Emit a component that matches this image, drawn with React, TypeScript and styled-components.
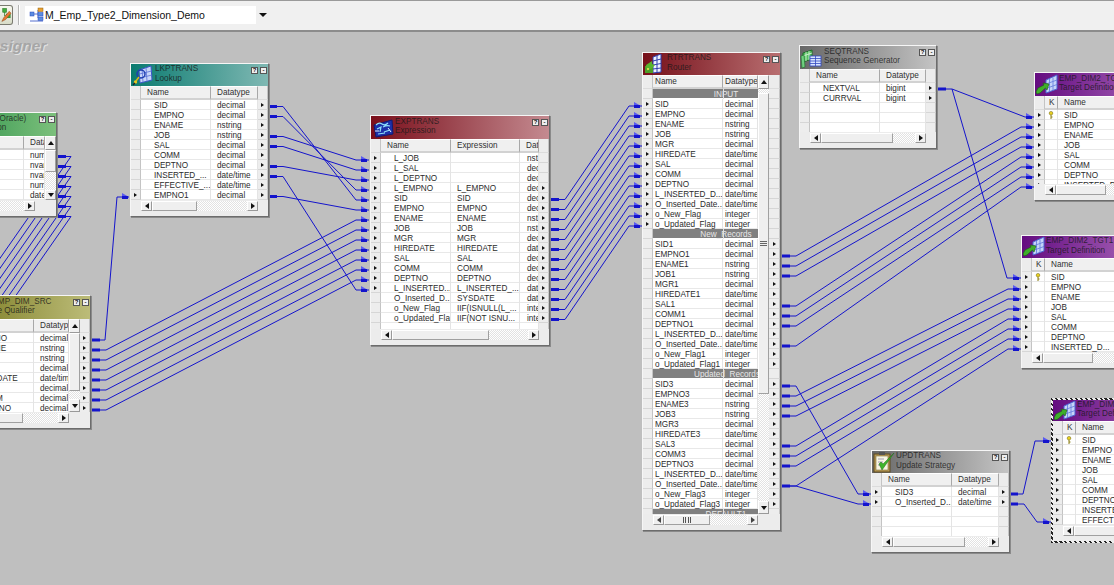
import React from "react";
import styled, { createGlobalStyle } from "styled-components";

const Global = createGlobalStyle`
  html, body { margin: 0; padding: 0; width: 1114px; height: 585px; overflow: hidden; background: #bfbfbf; }
  * { box-sizing: border-box; }
  body { font-family: "Liberation Sans", Arial, sans-serif; }
`;

const Page = styled.div`
  width: 1114px;
  height: 585px;
  display: flex;
  flex-direction: column;
  overflow: hidden;
`;
const Toolbar = styled.div`
  flex: 0 0 32px;
  display: flex;
  align-items: center;
  gap: 5px;
  padding: 0 0 2px 0;
  background: #f0f0f0;
  border-top: 1px solid #9a9a9a;
  border-bottom: 2px solid #8c8c8c;
`;
const ToolButton = styled.div`
  width: 13px;
  height: 20px;
  display: flex;
  align-items: center;
  justify-content: flex-end;
  overflow: hidden;
  background: linear-gradient(#f8f8f0, #d8dcc8);
  border: 1px solid #7a7a70;
  border-left: none;
  border-radius: 0 3px 3px 0;
`;
const Separator = styled.div`
  width: 2px;
  height: 20px;
  background: #b4b4b4;
  border-right: 1px solid #fff;
`;
const Combo = styled.div`
  width: 245px;
  height: 18px;
  display: flex;
  align-items: center;
  background: #fff;
  padding-left: 4px;
`;
const ComboText = styled.span`
  flex: 1;
  margin-left: 1px;
  font-size: 10.5px;
  color: #111;
  white-space: nowrap;
`;
const ComboDrop = styled.div`
  width: 14px;
  height: 18px;
  background: #f0f0f0;
  display: flex;
  align-items: center;
  justify-content: center;
  &::after {
    content: "";
    border-left: 4px solid transparent;
    border-right: 4px solid transparent;
    border-top: 4px solid #111;
  }
`;

const Canvas = styled.div`
  position: relative;
  flex: 1;
  background: #bfbfbf;
  overflow: hidden;
`;
const Watermark = styled.div`
  position: absolute;
  left: -20px;
  top: 5px;
  font-size: 15.5px;
  font-weight: bold;
  font-style: italic;
  color: #a6a6a6;
  text-shadow: 1px 1px 0 #e2e2e2;
`;
const Wires = styled.svg`
  position: absolute;
  left: 0;
  top: 0;
`;

const WindowBox = styled.div<{ $x: number; $y: number; $w: number; $h: number; $selected?: boolean }>`
  position: absolute;
  left: ${(p) => p.$x}px;
  top: ${(p) => p.$y - 32}px;
  width: ${(p) => p.$w}px;
  height: ${(p) => p.$h}px;
  display: flex;
  flex-direction: column;
  background: #ececec;
  border: 1px solid;
  border-color: #f6f6f6 #6c6c6c #6c6c6c #f6f6f6;
  box-shadow: 1px 1px 0 #8a8a8a;
  ${(p) =>
    p.$selected
      ? `border: 2px solid #000; border-image: repeating-linear-gradient(45deg, #222 0 1.5px, #eee 1.5px 3.5px) 2; box-shadow: none;`
      : ""}
`;
const TitleBar = styled.div<{ $from: string; $to: string; $h: number }>`
  flex: 0 0 ${(p) => p.$h}px;
  display: flex;
  align-items: center;
  background: linear-gradient(90deg, ${(p) => p.$from}, ${(p) => p.$to});
  padding-right: 1px;
  overflow: hidden;
`;
const TitleIconBox = styled.div`
  flex: 0 0 24px;
  height: 22px;
  display: flex;
  align-items: center;
  justify-content: center;
`;
const TitleText = styled.div`
  flex: 1;
  min-width: 0;
  font-size: 8.2px;
  line-height: 9.5px;
  color: rgba(24, 24, 24, 0.82);
  white-space: nowrap;
  overflow: visible;
  padding-bottom: 3px;
`;
const TitleBtns = styled.div`
  display: flex;
  gap: 2px;
  align-self: flex-start;
  margin-top: 3px;
`;
const TitleBtn = styled.div`
  width: 7px;
  height: 7px;
  background: #eee;
  border: 1px solid #555;
  font-size: 6px;
  line-height: 5px;
  font-weight: bold;
  text-align: center;
  color: #111;
`;
const Upper = styled.div`
  flex: 1;
  min-height: 0;
  display: flex;
  overflow: hidden;
`;
const LeftPart = styled.div`
  display: flex;
  flex-direction: column;
  flex: 0 0 auto;
`;
const HeaderRow = styled.div`
  flex: 0 0 14px;
  display: flex;
`;
const HeaderCorner = styled.div<{ $w: number }>`
  flex: none;
  width: ${(p) => p.$w}px;
  height: 14px;
  background: #ececec;
  border-right: 1px solid #c4c4c4;
  border-bottom: 1px solid #dcdcdc;
`;
const HeaderCell = styled.div<{ $w: number; $pad: number }>`
  flex: 0 0 ${(p) => p.$w}px;
  height: 14px;
  padding-left: ${(p) => p.$pad}px;
  background: #f0f0f0;
  border-right: 1px solid #a8a8a8;
  border-top: 1px solid #fff;
  border-bottom: 2px solid #d2d2d2;
  font-size: 8.2px;
  line-height: 11px;
  color: #303030;
  white-space: nowrap;
  overflow: hidden;
`;
const RowsArea = styled.div`
  flex: 1;
  min-height: 0;
  overflow: hidden;
`;
const Row = styled.div`
  display: flex;
  height: 10px;
`;
const Port = styled.div<{ $w: number; $on?: boolean }>`
  flex: none;
  width: ${(p) => p.$w}px;
  height: 10px;
  background: #ededed;
  border-right: 1px solid #c4c4c4;
  border-bottom: 1px solid #d6d6d6;
  display: flex;
  align-items: center;
  justify-content: center;
  ${(p) =>
    p.$on
      ? `&::after { content: ""; border-left: 3px solid #111; border-top: 2px solid transparent; border-bottom: 2px solid transparent; }`
      : ""}
`;
const Cell = styled.div<{ $w: number; $pad: number }>`
  flex: 0 0 ${(p) => p.$w}px;
  min-width: 0;
  height: 10px;
  padding-left: ${(p) => p.$pad}px;
  background: #fff;
  border-right: 1px solid #e4e4e4;
  box-shadow: inset 0 -1px 0 #e8e8e8;
  font-size: 8.2px;
  line-height: 12px;
  color: #2b2b2b;
  white-space: nowrap;
  overflow-x: clip;
  overflow-y: visible;
`;
const GroupCell = styled.div<{ $w: number; $split: number; $pad: number }>`
  position: relative;
  flex: 0 0 ${(p) => p.$w}px;
  height: 10px;
  padding-left: ${(p) => p.$pad}px;
  background: #808080;
  box-shadow: inset 0 -1px 0 #fff;
  font-size: 8.2px;
  line-height: 12px;
  text-align: center;
  color: #e8e8e8;
  white-space: nowrap;
  overflow: hidden;
  &::after {
    content: "";
    position: absolute;
    left: ${(p) => p.$split}px;
    top: 0;
    bottom: 0;
    width: 1px;
    background: #e0e0e0;
  }
`;
const KeyCell = styled(Cell)`
  padding: 0;
  display: flex;
  align-items: center;
  justify-content: center;
`;
const VScrollBar = styled.div<{ $w: number }>`
  flex: 0 0 ${(p) => p.$w}px;
  display: flex;
  flex-direction: column;
  background: repeating-conic-gradient(#fff 0 25%, #e2e2e2 0 50%) 0 0 / 2px 2px;
`;
const VArrow = styled.div<{ $h: number; $up?: boolean }>`
  flex: 0 0 ${(p) => p.$h}px;
  background: #f0f0f0;
  border: 1px solid;
  border-color: #fff #999 #999 #fff;
  display: flex;
  align-items: center;
  justify-content: center;
  &::after {
    content: "";
    border-left: 3.5px solid transparent;
    border-right: 3.5px solid transparent;
    ${(p) => (p.$up ? "border-bottom: 4px solid #111;" : "border-top: 4px solid #111;")}
  }
`;
const VThumb = styled.div<{ $h: number; $grip?: boolean }>`
  flex: 0 0 ${(p) => p.$h}px;
  background: #efefef;
  border: 1px solid;
  border-color: #fff #a0a0a0 #a0a0a0 #fff;
  display: flex;
  align-items: center;
  justify-content: center;
  ${(p) =>
    p.$grip
      ? `&::after { content: ""; width: 7px; height: 6px; background: repeating-linear-gradient(#666 0 1px, transparent 1px 2px); }`
      : ""}
`;
const VSpacer = styled.div<{ $h?: number }>`
  flex: ${(p) => (p.$h !== undefined ? `0 0 ${p.$h}px` : "1")};
`;
const PortColumn = styled.div`
  flex: 0 0 auto;
  display: flex;
  flex-direction: column;
  overflow: hidden;
`;
const Footer = styled.div<{ $left: number; $right: number }>`
  flex: 0 0 16px;
  position: relative;
  padding: 1px ${(p) => p.$right}px 5px ${(p) => p.$left}px;
  background: #ececec;
`;
const FooterBar = styled.div`
  height: 10px;
  display: flex;
  background: repeating-conic-gradient(#fff 0 25%, #e2e2e2 0 50%) 0 0 / 2px 2px;
`;
const HArrow = styled.div<{ $left?: boolean; $pale?: boolean }>`
  flex: 0 0 11px;
  background: #f0f0f0;
  border: 1px solid;
  border-color: #fff #999 #999 #fff;
  display: flex;
  align-items: center;
  justify-content: center;
  &::after {
    content: "";
    border-top: 3px solid transparent;
    border-bottom: 3px solid transparent;
    ${(p) => (p.$left ? "border-right" : "border-left")}: 4px solid ${(p) => (p.$pale ? "#444" : "#111")};
  }
`;
const HThumb = styled.div<{ $w: number; $grip?: boolean }>`
  flex: 0 0 ${(p) => p.$w}px;
  background: #efefef;
  border: 1px solid;
  border-color: #fff #a0a0a0 #a0a0a0 #fff;
  display: flex;
  align-items: center;
  justify-content: center;
  ${(p) =>
    p.$grip
      ? `&::after { content: ""; width: 8px; height: 6px; background: repeating-linear-gradient(90deg, #555 0 1px, transparent 1px 2.5px); }`
      : ""}
`;
const HTrack = styled.div`
  flex: 1;
`;

/* ---------- icons ---------- */
const Ic = styled.svg`
  display: block;
`;
const gridLines = (x: number, y: number, w: number, h: number, c: string) => (
  <g stroke={c} strokeWidth="0.8">
    <rect x={x} y={y} width={w} height={h} fill="#d8e4ff" />
    {[1, 2, 3].map((i) => (
      <line key={i} x1={x} x2={x + w} y1={y + (h * i) / 4} y2={y + (h * i) / 4} />
    ))}
    <line x1={x + w / 2} x2={x + w / 2} y1={y} y2={y + h} />
  </g>
);
const TitleIcon = ({ kind }: { kind: string }) => {
  if (kind === "lookup")
    return (
      <Ic width="24" height="22" viewBox="0 0 24 22">
        <path d="M8 6 L20 2 L21 16 L9 19 Z" fill="#c8d6f8" stroke="#3a55c8" strokeWidth="1" />
        <path d="M11 4.5 L12 18 M15 3.5 L16 17 M8.5 10 L20.5 7 M8.8 14 L21 11" stroke="#5a72d8" strokeWidth="0.8" />
        <circle cx="10" cy="10" r="4" fill="none" stroke="#1f3fb0" strokeWidth="1.5" />
        <circle cx="4.5" cy="18" r="1.7" fill="#e8c820" />
        <path d="M5 17 L8 13" stroke="#d8b818" strokeWidth="1.5" />
        <path d="M2 21 L4 19" stroke="#222" strokeWidth="1.4" />
      </Ic>
    );
  if (kind === "expr")
    return (
      <Ic width="24" height="22" viewBox="0 0 24 22">
        <path d="M3 8 L21 3 L22 17 L5 20 Z" fill="#1d2fa8" stroke="#101a70" />
        <path d="M5 8 Q8 5 11 7 T17 6 M6 12 L10 10 L9 15 M12 10 Q16 8 19 9 M13 15 L19 13 M7 17 L14 16" stroke="#8fe0f8" strokeWidth="1.2" fill="none" />
        <path d="M4 14 L8 14 M17 11 L20 15" stroke="#dff4ff" strokeWidth="1" />
      </Ic>
    );
  if (kind === "router")
    return (
      <Ic width="24" height="22" viewBox="0 0 24 22">
        <path d="M10 4 L18 1 L18 19 L10 20 Z" fill="#eef2ff" stroke="#2f3fae" />
        <path d="M10 8 L18 6 M10 12 L18 10.5 M10 16 L18 15 M14 2.5 L14 20" stroke="#2f3fae" strokeWidth="1" />
        <rect x="2" y="13" width="8" height="7" fill="#4d9c28" />
        <path d="M3 12 L9 8 L9 11 L12 12 L9 15 L4 18 Z" fill="#58b42c" />
        <circle cx="5" cy="16" r="1" fill="#f6e15a" />
      </Ic>
    );
  if (kind === "seq")
    return (
      <Ic width="24" height="22" viewBox="0 0 24 22">
        <path d="M3 6 L12 3 L12 12 L3 15 Z" fill="#55c060" stroke="#1f6f2a" />
        <path d="M6 5 L6 14 M9 4 L9 13 M3 9 L12 6" stroke="#dff5df" strokeWidth="0.8" />
        {gridLines(10, 9, 11, 10, "#3148c0")}
        <path d="M1 9 L4 8 L5 20 L2 21 Z" fill="#6fd080" stroke="#1f6f2a" strokeWidth="0.6" />
      </Ic>
    );
  if (kind === "update")
    return (
      <Ic width="24" height="22" viewBox="0 0 24 22">
        <rect x="2" y="3" width="16" height="18" fill="#b99a55" stroke="#5c4a20" />
        <rect x="4" y="5" width="12" height="14" fill="#f8f5e2" stroke="#7d7040" strokeWidth="0.6" />
        <path d="M6 8 H12 M6 11 H11 M6 14 H10" stroke="#88a" strokeWidth="0.8" />
        <rect x="7" y="1" width="6" height="3" fill="#555" />
        <path d="M7 13 L10 19 L22 2 L11 13 L9 11 Z" fill="#3fb52c" stroke="#216b18" strokeWidth="0.5" />
      </Ic>
    );
  return (
    <Ic width="24" height="22" viewBox="0 0 24 22">
      <path d="M11 6 L22 1 L22 15 L11 19 Z" fill="#c5d4f8" stroke="#4a64d0" />
      <path d="M14.5 5 L14.5 18 M18 3.5 L18 16.5 M11 10 L22 6 M11 14.5 L22 10.5" stroke="#5f78dc" strokeWidth="0.8" />
      <path d="M1 18 L3 14 L9 11 L8 9 L14 10 L12 16 L10.5 14 L5 19 L2 20 Z" fill="#3fae2a" stroke="#1b5e12" strokeWidth="0.6" />
    </Ic>
  );
};

const KeyIcon = () => (
  <svg width="6" height="8" viewBox="0 0 6 8">
    <circle cx="3" cy="2.2" r="1.8" fill="#e8d020" stroke="#6a6010" strokeWidth="0.5" />
    <path d="M3 4 V8 M3 6 H4.5" stroke="#8a7c10" strokeWidth="1" />
  </svg>
);

const ToolIcon = () => (
  <svg width="13" height="18" viewBox="0 0 13 18">
    <rect x="3" y="2" width="4" height="4" fill="#3fae3a" stroke="#1b6e1a" strokeWidth="0.6" />
    <rect x="7" y="8" width="4" height="4" fill="#3fae3a" stroke="#1b6e1a" strokeWidth="0.6" />
    <path d="M5 6 V10 H7" stroke="#1b6e1a" fill="none" strokeWidth="0.8" />
    <path d="M2 16 L4 12 L10 5 L12 7 L6 14 Z" fill="#e87830" stroke="#80401a" strokeWidth="0.5" />
  </svg>
);
const MappingIcon = () => (
  <svg width="15" height="15" viewBox="0 0 15 15">
    <path d="M4 7 H9 M9 3 V11 M1 14 H14" stroke="#2a4ac0" strokeWidth="0.8" fill="none" />
    <rect x="1" y="5" width="4" height="4" fill="#5a8de0" stroke="#2a4ac0" strokeWidth="0.5" />
    <rect x="9" y="1" width="5" height="3.5" fill="#e8a030" stroke="#906010" strokeWidth="0.5" />
    <rect x="9" y="5.5" width="5" height="3.5" fill="#5a8de0" stroke="#2a4ac0" strokeWidth="0.5" />
    <rect x="9" y="10" width="5" height="3.5" fill="#5a8de0" stroke="#2a4ac0" strokeWidth="0.5" />
  </svg>
);

/* ---------- data ---------- */
type RowData = {
  cells?: string[];
  l?: boolean;
  r?: boolean;
  group?: string;
  key?: boolean;
};
type Col = { w: number; pad: number; label: string };
type Scroll = { upH: number; gap: number; thumb: number; downH: number; grip?: boolean };
type WinProps = {
  x: number;
  y: number;
  w: number;
  h: number;
  titleH: number;
  from: string;
  to: string;
  kind: string;
  title: string;
  sub: string;
  cols: Col[];
  rows: RowData[];
  rightW?: number;
  scroll?: Scroll;
  thumbW: number;
  noButtons?: boolean;
  selected?: boolean;
  grip?: boolean;
  keyCol?: boolean;
};

const r = (a: string, b: string, l = false, rr = true): RowData => ({ cells: [a, b], l, r: rr });
const blanks = (n: number): RowData[] => Array.from({ length: n }, () => ({ cells: ["", ""] }));

const Window = (p: WinProps) => {
  const rightW = p.rightW ?? 10;
  const vs = p.scroll ? 11 : 0;
  const colsW = p.cols.reduce((s, c) => s + c.w, 0);
  return (
    <WindowBox $x={p.x} $y={p.y} $w={p.w} $h={p.h} $selected={p.selected}>
      <TitleBar $from={p.from} $to={p.to} $h={p.titleH}>
        <TitleIconBox>
          <TitleIcon kind={p.kind} />
        </TitleIconBox>
        <TitleText>
          {p.title}
          <br />
          {p.sub}
        </TitleText>
        {!p.noButtons && (
          <TitleBtns>
            <TitleBtn>?</TitleBtn>
            <TitleBtn>-</TitleBtn>
          </TitleBtns>
        )}
      </TitleBar>
      <Upper>
        <LeftPart>
          <HeaderRow>
            <HeaderCorner $w={10} />
            {p.cols.map((c, i) => (
              <HeaderCell key={i} $w={c.w} $pad={c.label === "K" ? 4 : Math.min(c.pad, 6)}>
                {c.label}
              </HeaderCell>
            ))}
          </HeaderRow>
          <RowsArea>
            {p.rows.map((row, i) => (
              <Row key={i}>
                <Port $w={10} $on={row.l} />
                {row.group ? (
                  <GroupCell $w={colsW} $split={p.cols[0].w} $pad={41}>
                    {row.group}
                  </GroupCell>
                ) : (
                  p.cols.map((c, j) => {
                    if (c.label === "K")
                      return (
                        <KeyCell key={j} $w={c.w} $pad={0}>
                          {row.key && <KeyIcon />}
                        </KeyCell>
                      );
                    const idx = p.keyCol ? j - 1 : j;
                    return (
                      <Cell key={j} $w={c.w} $pad={c.pad}>
                        {row.cells?.[idx]}
                      </Cell>
                    );
                  })
                )}
              </Row>
            ))}
          </RowsArea>
        </LeftPart>
        {p.scroll && (
          <VScrollBar $w={vs}>
            <VArrow $h={p.scroll.upH} $up />
            <VSpacer $h={p.scroll.gap} />
            <VThumb $h={p.scroll.thumb} $grip={p.scroll.grip} />
            <VSpacer />
            <VArrow $h={p.scroll.downH} />
          </VScrollBar>
        )}
        <PortColumn>
          <HeaderCorner $w={rightW} />
          {p.rows.map((row, i) => (
            <Port key={i} $w={rightW} $on={row.r} />
          ))}
        </PortColumn>
      </Upper>
      <Footer $left={10} $right={rightW + vs}>
        <FooterBar>
          <HArrow $left $pale={p.grip} />
          <HThumb $w={p.thumbW} $grip={p.grip} />
          <HTrack />
          <HArrow $pale={p.grip} />
        </FooterBar>
      </Footer>
    </WindowBox>
  );
};

/* ---------- table contents ---------- */
const lkpCols: Col[] = [
  { w: 70, pad: 13, label: "Name" },
  { w: 47, pad: 6, label: "Datatype" },
];
const lkpRows: RowData[] = [
  r("SID", "decimal"),
  r("EMPNO", "decimal"),
  r("ENAME", "nstring"),
  r("JOB", "nstring"),
  r("SAL", "decimal"),
  r("COMM", "decimal"),
  r("DEPTNO", "decimal"),
  r("INSERTED_...", "date/time"),
  r("EFFECTIVE_...", "date/time"),
  r("EMPNO1", "decimal", true, true),
];
const expCols: Col[] = [
  { w: 70, pad: 13, label: "Name" },
  { w: 69, pad: 6, label: "Expression" },
  { w: 19, pad: 7, label: "Dat" },
];
const er = (a: string, b: string, c: string, l: boolean, rr: boolean): RowData => ({ cells: [a, b, c], l, r: rr });
const expRows: RowData[] = [
  er("L_JOB", "", "nstring", true, false),
  er("L_SAL", "", "decimal", true, false),
  er("L_DEPTNO", "", "decimal", true, false),
  er("L_EMPNO", "L_EMPNO", "decimal", true, true),
  er("SID", "SID", "decimal", true, true),
  er("EMPNO", "EMPNO", "decimal", true, true),
  er("ENAME", "ENAME", "nstring", true, true),
  er("JOB", "JOB", "nstring", true, true),
  er("MGR", "MGR", "decimal", true, true),
  er("HIREDATE", "HIREDATE", "date/time", true, true),
  er("SAL", "SAL", "decimal", true, true),
  er("COMM", "COMM", "decimal", true, true),
  er("DEPTNO", "DEPTNO", "decimal", true, true),
  er("L_INSERTED...", "L_INSERTED_...", "date/time", true, true),
  er("O_Inserted_D...", "SYSDATE", "date/time", false, true),
  er("o_New_Flag", "IIF(ISNULL(L_...", "integer", false, true),
  er("o_Updated_Flag", "IIF(NOT ISNU...", "integer", false, true),
  er("", "", "", false, false),
];
const rtrCols: Col[] = [
  { w: 70, pad: 2, label: "Name" },
  { w: 35, pad: 2, label: "Datatype" },
];
const rtrGroup = (suffix: string): RowData[] => [
  r("SID" + suffix, "decimal"),
  r("EMPNO" + suffix, "decimal"),
  r("ENAME" + suffix, "nstring"),
  r("JOB" + suffix, "nstring"),
  r("MGR" + suffix, "decimal"),
  r("HIREDATE" + suffix, "date/time"),
  r("SAL" + suffix, "decimal"),
  r("COMM" + suffix, "decimal"),
  r("DEPTNO" + suffix, "decimal"),
  r("L_INSERTED_D...", "date/time"),
  r("O_Inserted_Date...", "date/time"),
  r("o_New_Flag" + suffix, "integer"),
  r("o_Updated_Flag" + suffix, "integer"),
];
const rtrRows: RowData[] = [
  { group: "INPUT" },
  ...rtrGroup("").map((x) => ({ ...x, l: true, r: false })),
  { group: "New_Records" },
  ...rtrGroup("1"),
  { group: "Updated_Records" },
  ...rtrGroup("3"),
  { group: "DEFAULT1" },
];
const seqRows: RowData[] = [
  r("NEXTVAL", "bigint"),
  r("CURRVAL", "bigint"),
  ...blanks(3),
];
const updRows: RowData[] = [
  r("SID3", "decimal", true, true),
  r("O_Inserted_D...", "date/time", true, true),
  ...blanks(3),
];
const tgtCols: Col[] = [
  { w: 13, pad: 0, label: "K" },
  { w: 75, pad: 6, label: "Name" },
  { w: 40, pad: 6, label: "Datatype" },
];
const tr = (n: string, key = false): RowData => ({ cells: [n, ""], l: true, key });
const tgtBase = ["EMPNO", "ENAME", "JOB", "SAL", "COMM", "DEPTNO"].map((n) => tr(n));
const tgtRows: RowData[] = [tr("SID", true), ...tgtBase, tr("INSERTED_D...")];
const tgtRows3: RowData[] = [tr("SID", true), ...tgtBase, tr("INSERTED_D..."), tr("EFFECTIVE_D...")];
const srcCols: Col[] = [
  { w: 94, pad: 13, label: "Name" },
  { w: 21, pad: 6, label: "Datatype" },
];
const srcRows: RowData[] = [
  r("EMPNO", "number"),
  r("ENAME", "nvarchar2"),
  r("JOB", "nvarchar2"),
  r("MGR", "number"),
  r("HIREDATE", "date"),
];
const sqCols: Col[] = [
  { w: 72, pad: 15, label: "Name" },
  { w: 35, pad: 6, label: "Datatype" },
];
const sqRows: RowData[] = [
  r("EMPNO", "decimal"),
  r("ENAME", "nstring"),
  r("JOB", "nstring"),
  r("MGR", "decimal"),
  r("HIREDATE", "date/time"),
  r("SAL", "decimal"),
  r("COMM", "decimal"),
  r("DEPTNO", "decimal"),
];

/* ---------- wires ---------- */
const BLUE = "#1414cc";
const Stub = ({ x, y }: { x: number; y: number }) => <rect x={x} y={y - 1.5} width={8} height={3} fill={BLUE} />;
const Head = ({ x, y }: { x: number; y: number }) => (
  <g>
    <polygon points={`${x - 8},${y - 4} ${x - 1},${y} ${x - 8},${y + 2}`} fill="#5a5af0" />
    <rect x={x - 8} y={y - 1} width={6} height={3} fill={BLUE} />
  </g>
);
const Line = ({ pts }: { pts: number[][] }) => (
  <polyline points={pts.map((q) => q.join(",")).join(" ")} fill="none" stroke={BLUE} strokeWidth={1} />
);
const wire = (sx: number, sy: number, tx: number, ty: number, leadOut = 14, leadIn = 13) => (
  <Line
    pts={[
      [sx, sy],
      [sx + leadOut, sy],
      [tx - leadIn, ty],
      [tx, ty],
    ]}
  />
);

const range = (a: number, n: number, step = 10) => Array.from({ length: n }, (_, i) => a + i * step);

const Links = () => {
  const lkp: [number, number][] = [
    [136.5, 160],
    [146.5, 170],
    [166.5, 180],
    [106.5, 200],
    [116.5, 190],
    [196.5, 210],
    [176.5, 290],
  ];
  const expOut = range(199.5, 13);
  const rtrNew: [number, number][] = [
    [256, 127],
    [266, 137],
    [276, 147],
    [306, 157],
    [316, 167],
    [326, 177],
    [346, 187],
  ];
  const rtrUpd: [number, number][] = [
    [396, 289],
    [406, 299],
    [416, 309],
    [446, 319],
    [456, 329],
    [466, 339],
    [486, 349],
  ];
  return (
    <Wires width="1114" height="585" viewBox="0 32 1114 585">
      {range(156.5, 7).map((y) => (
        <g key={y}>
          <Stub x={58} y={y} />
          <Line pts={[[58, y], [71, y], [-49, y + 172]]} />
        </g>
      ))}
      {lkp.map(([y, t]) => (
        <g key={y}>
          <Stub x={269} y={y} />
          {wire(269, y, 369, t)}
          <Head x={369} y={t} />
        </g>
      ))}
      <Stub x={92} y={340} />
      <Line pts={[[92, 340], [105, 340], [117, 197], [129, 197]]} />
      <Head x={130} y={197} />
      {range(350, 7).map((y, i) => (
        <g key={y}>
          <Stub x={92} y={y} />
          {wire(92, y, 369, 220 + i * 10)}
          <Head x={369} y={220 + i * 10} />
        </g>
      ))}
      {expOut.map((y, i) => (
        <g key={y}>
          <Stub x={551} y={y} />
          {wire(551, y, 642, 106 + i * 10)}
          <Head x={642} y={106 + i * 10} />
        </g>
      ))}
      {rtrNew.map(([y, t]) => (
        <g key={y}>
          <Stub x={782} y={y} />
          {wire(782, y, 1034, t)}
          <Head x={1034} y={t} />
        </g>
      ))}
      {rtrUpd.map(([y, t]) => (
        <g key={y}>
          <Stub x={782} y={y} />
          {wire(782, y, 1021, t)}
          <Head x={1021} y={t} />
        </g>
      ))}
      <Stub x={782} y={386} />
      {wire(782, 386, 871, 494)}
      <Head x={871} y={494} />
      {wire(782, 486, 871, 504)}
      <Head x={871} y={504} />
      <Stub x={938} y={89} />
      <Line pts={[[938, 89], [952, 89], [1025, 117], [1034, 117]]} />
      <Head x={1034} y={117} />
      <Line pts={[[952, 89], [1007, 278], [1021, 278]]} />
      <Head x={1021} y={278} />
      <Stub x={1010} y={494} />
      <Line pts={[[1010, 494], [1023, 494], [1035, 441], [1051, 441]]} />
      <Head x={1051} y={441} />
      <Stub x={1010} y={504} />
      <Line pts={[[1010, 504], [1024, 504], [1037, 522], [1051, 522]]} />
      <Head x={1051} y={522} />
    </Wires>
  );
};

export default function App() {
  return (
    <Page>
      <Global />
      <Toolbar>
        <ToolButton>
          <ToolIcon />
        </ToolButton>
        <Separator />
        <Combo>
          <MappingIcon />
          <ComboText>M_Emp_Type2_Dimension_Demo</ComboText>
          <ComboDrop />
        </Combo>
      </Toolbar>
      <Canvas>
        <Watermark>Designer</Watermark>
        <Links />
        <Window x={-81} y={112} w={138} h={105} titleH={23} from="#16823a" to="#7cc07c" kind="target"
          title="EMPLOYEES (Oracle)" sub="Source Definition" cols={srcCols} rows={srcRows}
          scroll={{ upH: 14, gap: 0, thumb: 22, downH: 10 }} thumbW={40} />
        <Window x={-49} y={295} w={140} h={134} titleH={23} from="#76761c" to="#bcbc78" kind="seq"
          title="SQ_EMP_DIM_SRC" sub="Source Qualifier" cols={sqCols} rows={sqRows}
          scroll={{ upH: 14, gap: 0, thumb: 58, downH: 13 }} thumbW={50} />
        <Window x={130} y={63} w={139} h={154} titleH={22} from="#0b7b70" to="#7fb8b3" kind="lookup"
          title="LKPTRANS" sub="Lookup" cols={lkpCols} rows={lkpRows} thumbW={45} />
        <Window x={370} y={115} w={180} h={231} titleH={23} from="#7a0e1a" to="#c48a90" kind="expr"
          title="EXPTRANS" sub="Expression" cols={expCols} rows={expRows} thumbW={97} />
        <Window x={642} y={52} w={139} h={479} titleH={22} from="#76101a" to="#b86e70" kind="router"
          title="RTRTRANS" sub="Router" cols={rtrCols} rows={rtrRows} rightW={11}
          scroll={{ upH: 14, gap: 4, thumb: 301, downH: 13, grip: true }} thumbW={46} grip />
        <Window x={799} y={45} w={138} h={104} titleH={23} from="#676767" to="#c4c4c4" kind="seq"
          title="SEQTRANS" sub="Sequence Generator" cols={lkpCols.map((c, i) => (i === 1 ? { ...c, w: 46 } : c))}
          rows={seqRows} thumbW={72} />
        <Window x={871} y={450} w={139} h={103} titleH={22} from="#686868" to="#c4c4c4" kind="update"
          title="UPDTRANS" sub="Update Strategy" cols={lkpCols} rows={updRows} thumbW={72} />
        <Window x={1034} y={72} w={140} h={129} titleH={23} from="#640c80" to="#b070c0" kind="target"
          title="EMP_DIM2_TGT (Oracle)" sub="Target Definition" cols={tgtCols} rows={tgtRows} thumbW={50} keyCol noButtons />
        <Window x={1021} y={235} w={140} h={134} titleH={22} from="#640c80" to="#b070c0" kind="target"
          title="EMP_DIM2_TGT1 (Oracle)" sub="Target Definition" cols={tgtCols} rows={tgtRows} thumbW={50} keyCol noButtons />
        <Window x={1051} y={398} w={140} h={145} titleH={21} from="#640c80" to="#b070c0" kind="target" selected
          title="EMP_DIM2_TGT3 (Oracle)" sub="Target Definition" cols={tgtCols} rows={tgtRows3} thumbW={50} keyCol noButtons />
      </Canvas>
    </Page>
  );
}
